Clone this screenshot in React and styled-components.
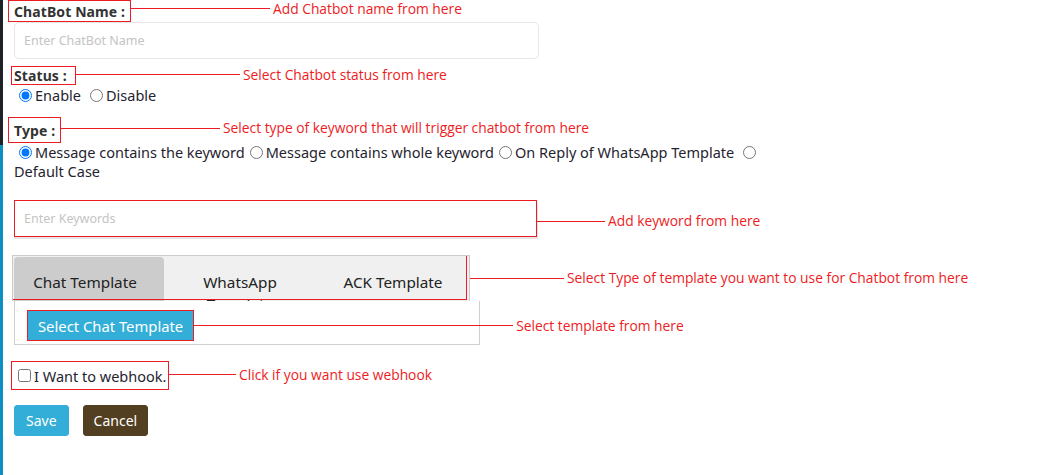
import React from "react";
import styled, { createGlobalStyle } from "styled-components";

const RED = "#ed1c24";

const Global = createGlobalStyle`
  html, body { margin: 0; padding: 0; background: #fff; }
  body { font-family: "Noto Sans", "Open Sans", sans-serif; color: #222; }
  * { box-sizing: border-box; }
`;

const Page = styled.div`
  display: flex;
  width: 1042px;
  height: 475px;
  overflow: hidden;
  background: #fff;
`;

const Strip = styled.div`
  flex: 0 0 3px;
  background: linear-gradient(#1f2227 0 145px, #0c8ec0 145px 100%);
`;

const Content = styled.div`
  flex: 1;
  display: flex;
  flex-direction: column;
  align-items: flex-start;
`;

const AnnotRow = styled.div`
  display: flex;
  align-items: ${(p) => p.$align || "center"};
  margin-left: ${(p) => p.$ml || 0}px;
  margin-top: ${(p) => p.$mt || 0}px;
  flex-shrink: 0;
  white-space: nowrap;
`;

const LabelBox = styled.div`
  border: 1px solid ${RED};
  width: ${(p) => p.$w}px;
  height: ${(p) => p.$h}px;
  padding: ${(p) => p.$pad || "0 0 0 5px"};
  display: flex;
  align-items: ${(p) => p.$align || "center"};
  font-weight: 700;
  font-size: 14px;
  line-height: 19px;
  color: #333;
  letter-spacing: 0.1px;
`;

const Connector = styled.span`
  display: block;
  flex: 0 0 ${(p) => p.$w}px;
  height: 1px;
  background: ${RED};
  margin-left: ${(p) => p.$ml || 0}px;
  margin-top: ${(p) => p.$mt || 0}px;
`;

const Note = styled.span`
  font-family: "Open Sans", "Noto Sans", sans-serif;
  font-size: 13.8px;
  color: ${RED};
  margin-left: 3px;
  margin-top: ${(p) => p.$mt || 0}px;
  line-height: 18px;
  white-space: nowrap;
  flex-shrink: 0;
`;

const TextInput = styled.input`
  display: block;
  width: 525px;
  height: 37px;
  margin: 0 0 0 11px;
  border: 1px solid #e6e6e6;
  border-radius: 5px;
  padding: 0 9px;
  font-family: inherit;
  font-size: 12.5px;
  outline: none;
  &::placeholder { color: #c4c4c4; }
`;

const KeywordInput = styled(TextInput)`
  width: 523px;
  margin: 0;
  border: 1px solid ${RED};
  border-radius: 0;
  box-shadow: 0 2px 0 #e4e4e4, 1px 2px 0 #e4e4e4;
`;

const RadioGroup = styled.div`
  display: flex;
  flex-wrap: wrap;
  align-items: center;
  width: ${(p) => p.$w || 800}px;
  margin-left: ${(p) => p.$ml || 0}px;
  margin-top: ${(p) => p.$mt || 0}px;
  font-size: 14.5px;
  line-height: 19px;
  color: #1f2430;
`;

const Choice = styled.label`
  display: inline-flex;
  align-items: center;
  margin-right: ${(p) => p.$mr || 0}px;
  white-space: nowrap;
  input {
    width: 13px;
    height: 13px;
    margin: 0 3px 0 5px;
    accent-color: #0075ff;
  }
`;

const TabsRow = styled.div`
  display: flex;
  align-items: center;
  margin: 18px 0 0 9px;
  white-space: nowrap;
`;

const TabBar = styled.div`
  position: relative;
  width: 458px;
  height: 46px;
  background: #f0f0f0;
  border: 1px solid #ccc;
  border-bottom: none;
  display: flex;
  padding: 1px 0 0 1px;
  overflow: hidden;
`;

const Highlight = styled.div`
  position: absolute;
  left: -1px;
  top: -1px;
  width: 455px;
  height: 45px;
  border: 1px solid ${RED};
  pointer-events: none;
`;

const Tab = styled.div`
  flex: 0 0 ${(p) => p.$w}px;
  text-align: center;
  font-size: 15.3px;
  line-height: 22px;
  padding: 14px 20px 0 ${(p) => p.$pl ?? 20}px;
  white-space: normal;
  color: #222;
  background: ${(p) => (p.$active ? "#cccccc" : "transparent")};
  border-radius: 4px 4px 0 0;
`;

const Panel = styled.div`
  width: 466px;
  height: 44px;
  margin-left: 11px;
  border: 1px solid #cfcfcf;
  border-top: none;
  padding: 6px 0 0 12px;
  display: flex;
  align-items: center;
  align-self: flex-start;
  position: relative;
  z-index: 1;
  background: #fff;
  overflow: visible;
`;

const Button = styled.button`
  font-family: inherit;
  font-size: ${(p) => p.$fs || 14}px;
  color: #fff;
  background: ${(p) => p.$bg || "#31b0d5"};
  border: 1px solid ${(p) => p.$bc || p.$bg || "#31b0d5"};
  border-radius: ${(p) => p.$r ?? 3}px;
  height: ${(p) => p.$h || 31}px;
  padding: 0 ${(p) => p.$px || 10}px;
  margin-left: ${(p) => p.$ml || 0}px;
  flex-shrink: 0;
  cursor: pointer;
`;

const CheckBox = styled.label`
  display: flex;
  align-items: center;
  border: 1px solid ${RED};
  width: 158px;
  height: 29px;
  padding-left: 5px;
  font-size: 14.5px;
  color: #1f2430;
  white-space: nowrap;
  input {
    width: 13px;
    height: 13px;
    margin: 0 3px 0 1px;
  }
`;

const Actions = styled.div`
  display: flex;
  margin: 15px 0 0 11px;
`;

export default function App() {
  return (
    <Page>
      <Global />
      <Strip />
      <Content>
        <AnnotRow $ml={5} $align="flex-start">
          <LabelBox $w={123} $h={22} $pad="0 0 0 5px" $align="flex-end">
            ChatBot Name :
          </LabelBox>
          <Connector $w={139} $mt={8} />
          <Note $mt={0}>Add Chatbot name from here</Note>
        </AnnotRow>

        <TextInput placeholder="Enter ChatBot Name" />

        <AnnotRow $ml={8} $mt={7}>
          <LabelBox $w={65} $h={19} $pad="0 0 0 2px">Status :</LabelBox>
          <Connector $w={164} $mt={-2} />
          <Note $mt={-2}>Select Chatbot status from here</Note>
        </AnnotRow>

        <RadioGroup $ml={11} $mt={1}>
          <Choice $mr={4}>
            <input type="radio" name="status" defaultChecked />
            Enable
          </Choice>
          <Choice>
            <input type="radio" name="status" />
            Disable
          </Choice>
        </RadioGroup>

        <AnnotRow $ml={5} $mt={12} $align="flex-start">
          <LabelBox $w={53} $h={26} $pad="0 0 2px 5px" $align="flex-end">
            Type :
          </LabelBox>
          <Connector $w={159} $mt={11} />
          <Note $mt={2}>Select type of keyword that will trigger chatbot from here</Note>
        </AnnotRow>

        <RadioGroup $ml={11} $w={770}>
          <Choice>
            <input type="radio" name="type" defaultChecked />
            Message contains the keyword
          </Choice>
          <Choice>
            <input type="radio" name="type" />
            Message contains whole keyword
          </Choice>
          <Choice>
            <input type="radio" name="type" />
            On Reply of WhatsApp Template&nbsp;
          </Choice>
          <Choice>
            <input type="radio" name="type" />
          </Choice>
          <span>Default Case</span>
        </RadioGroup>

        <AnnotRow $ml={11} $mt={19}>
          <KeywordInput placeholder="Enter Keywords" />
          <Connector $w={68} $mt={6} />
          <Note $mt={4}>Add keyword from here</Note>
        </AnnotRow>

        <TabsRow>
          <TabBar>
            <Tab $w={150} $pl={12} $active>Chat Template</Tab>
            <Tab $w={152}>WhatsApp Template</Tab>
            <Tab $w={150} $pl={24}>ACK Template</Tab>
            <Highlight />
          </TabBar>
          <Connector $w={98} $ml={-4} />
          <Note>Select Type of template you want to use for Chatbot from here</Note>
        </TabsRow>

        <Panel>
          <Button $bg="#33aed8" $bc={RED} $r={0} $h={31} $px={10} $fs={14.8}>
            Select Chat Template
          </Button>
          <Connector $w={319} />
          <Note>Select template from here</Note>
        </Panel>

        <AnnotRow $ml={8} $mt={16}>
          <CheckBox>
            <input type="checkbox" />I Want to webhook.
          </CheckBox>
          <Connector $w={67} $mt={-2} />
          <Note $mt={-2}>Click if you want use webhook</Note>
        </AnnotRow>

        <Actions>
          <Button $bg="#33aed8" $px={11}>Save</Button>
          <Button $bg="#523f22" $px={10} $ml={14}>Cancel</Button>
        </Actions>
      </Content>
    </Page>
  );
}
